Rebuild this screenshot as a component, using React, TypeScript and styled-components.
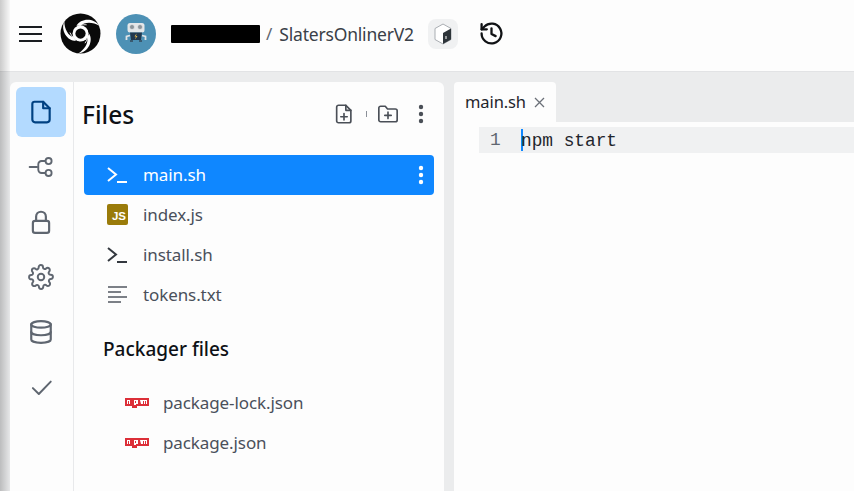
import React from 'react';
import styled, {createGlobalStyle} from 'styled-components';

const GlobalStyle = createGlobalStyle`
  html, body {
    margin: 0;
    padding: 0;
    height: 100%;
    overflow: hidden;
    background-color: #ebeced;
    font-family: "Noto Sans", "Open Sans", sans-serif;
  }
  #root {
    height: 100%;
  }
`;

const Page = styled.div`
  position: relative;
  display: flex;
  flex-direction: column;
  width: 854px;
  height: 491px;
  overflow: hidden;
`;

const EdgeShadow = styled.div`
  position: absolute;
  top: 0;
  left: 0;
  bottom: 0;
  width: 10px;
  background: linear-gradient(to right, rgba(0, 0, 0, .2), rgba(0, 0, 0, .02));
  pointer-events: none;
`;

const Header = styled.header`
  display: flex;
  align-items: center;
  flex: 0 0 72px;
  box-sizing: border-box;
  height: 72px;
  padding: 0 0 4px 19px;
  background-color: #fdfdfd;
  border-bottom: 1px solid #e2e3e5;
`;

const LogoSlot = styled.div`
  display: flex;
  margin: 0 15px 0 17px;
`;

const Owner = styled.div`
  width: 89px;
  height: 18px;
  margin: 0 6px 0 15px;
  background-color: #000;
  border-radius: 1px;
`;

const Slash = styled.span`
  margin-right: 7px;
  color: #5f6670;
  font-size: 17px;
`;

const RepoName = styled.span`
  width: 134px;
  color: #3a4048;
  font-size: 17.5px;
  letter-spacing: -0.2px;
  white-space: nowrap;
`;

const LangBadge = styled.div`
  display: flex;
  justify-content: center;
  align-items: center;
  width: 30px;
  height: 30px;
  margin: 0 21px 0 15px;
  background-color: #f0f1f2;
  border-radius: 8px;
`;

const Workspace = styled.div`
  display: flex;
  flex: 1;
  min-height: 0;
  gap: 10px;
  padding: 10px 0 0 10px;
`;

const LeftPanel = styled.section`
  display: flex;
  flex: 0 0 434px;
  background-color: #fdfdfd;
  border-radius: 6px 6px 0 0;
`;

const Rail = styled.nav`
  display: flex;
  flex-direction: column;
  align-items: center;
  flex: 0 0 63px;
  box-sizing: border-box;
  gap: 5px;
  padding: 5px 7px 0 6px;
  border-right: 1px solid #e8e9eb;
`;

const RailButton = styled.div<{$active?: boolean}>`
  display: flex;
  justify-content: center;
  align-items: center;
  flex: 0 0 50px;
  width: 50px;
  color: ${props => props.$active ? '#004182' : '#5f6670'};
  background-color: ${props => props.$active ? '#b3daff' : 'transparent'};
  border-radius: 6px;
`;

const FilesPane = styled.div`
  flex: 1;
  min-width: 0;
  padding: 0 10px;
`;

const FilesHeader = styled.div`
  display: flex;
  align-items: center;
  height: 64px;
`;

const FilesTitle = styled.h2`
  flex: 1;
  margin: 0 0 -1px -2px;
  color: #0e1116;
  font-size: 24.5px;
  font-weight: 500;
`;

const HeaderTools = styled.div`
  display: flex;
  align-items: center;
  margin-right: 10px;
  color: #4a4f57;
`;

const ToolDivider = styled.div`
  width: 1px;
  height: 6px;
  margin: 0 10px 0 11px;
  background-color: #8b9098;
`;

const ToolKebab = styled.div`
  display: flex;
  margin-left: 19px;
`;

const FileList = styled.div`
  display: flex;
  flex-direction: column;
  margin-top: 9px;
`;

const FileRow = styled.div<{$active?: boolean; $indent?: boolean}>`
  display: flex;
  align-items: center;
  height: 40px;
  padding-left: ${props => props.$indent ? '41px' : '23px'};
  padding-right: 10px;
  color: ${props => props.$active ? '#fff' : '#4a505b'};
  background-color: ${props => props.$active ? '#0f87ff' : 'transparent'};
  border-radius: 4px;
`;

const FileIconSlot = styled.div`
  display: flex;
  justify-content: center;
  align-items: center;
  flex: 0 0 22px;
  height: 22px;
  margin-right: 14px;
`;

const FileName = styled.span`
  flex: 1;
  margin-top: -2px;
  font-size: 17px;
  letter-spacing: -0.1px;
`;

const RowMenu = styled.div`
  display: flex;
  color: #fff;
`;

const JsBadge = styled.div`
  display: flex;
  justify-content: flex-end;
  align-items: flex-end;
  box-sizing: border-box;
  width: 21px;
  height: 21px;
  margin: -2px 1px 0 0;
  padding: 0 2px 2px 0;
  color: #fff;
  background-color: #9a7b0a;
  border-radius: 2px;
  font-family: "Liberation Sans", sans-serif;
  font-size: 11.500px;
  font-weight: 700;
  line-height: 1;
`;

const SectionTitle = styled.h3`
  margin: 22px 0 22px 19px;
  color: #0e1116;
  font-size: 19px;
  font-weight: 500;
  line-height: 24px;
`;

const RightPanel = styled.section`
  display: flex;
  flex-direction: column;
  flex: 1;
  min-width: 0;
`;

const TabBar = styled.div`
  display: flex;
  flex: 0 0 40px;
`;

const Tab = styled.div`
  display: flex;
  align-items: center;
  box-sizing: border-box;
  width: 102px;
  padding: 0 0 2px 11px;
  color: #1f252c;
  background-color: #fdfdfd;
  border-radius: 4px 4px 0 0;
  font-size: 16.500px;
  letter-spacing: -0.1px;
`;

const TabClose = styled.div`
  display: flex;
  margin: 2px 0 0 8px;
  color: #6b7078;
`;

const Editor = styled.div`
  flex: 1;
  padding-top: 5px;
  background-color: #fdfdfd;
`;

const CodeLine = styled.div`
  display: flex;
  align-items: center;
  height: 26px;
  margin-left: 25px;
  background-color: #f0f1f2;
`;

const LineNumber = styled.span`
  flex: 0 0 42px;
  box-sizing: border-box;
  padding-left: 11px;
  color: #5f6670;
  font-family: "Liberation Mono", monospace;
  font-size: 17.800px;
`;

const Caret = styled.span`
  flex: 0 0 2px;
  height: 22px;
  margin-right: -2px;
  background-color: #0f87ff;
`;

const Code = styled.span`
  margin-top: 1px;
  color: #1f252c;
  font-family: "Liberation Mono", monospace;
  font-size: 17.800px;
`;

const Stroke = ({size = 24, width = 2, children}: {size?: number; width?: number; children: React.ReactNode}) =>
  <svg width={size} height={size} viewBox="0 0 24 24" fill="none" stroke="currentColor" strokeWidth={width}
       strokeLinecap="round" strokeLinejoin="round">{children}</svg>;

const FileIcon = () => <Stroke size={26}>
  <path d="M6 2.500h8l6 6V19a2.500 2.500 0 0 1-2.500 2.500h-11A2.500 2.500 0 0 1 4 19V4.500a2 2 0 0 1 2-2Z"/>
  <path d="M14 2.500V8.500h6"/>
</Stroke>;

const GitIcon = () => <Stroke size={26} width={1.7}>
  <path d="M1.500 12h7"/>
  <path d="M16 6.500h-3.500a3 3 0 0 0-3 3v5a3 3 0 0 0 3 3H16"/>
  <circle cx="19" cy="6.500" r="2.800"/>
  <circle cx="19" cy="17.500" r="2.800"/>
</Stroke>;

const LockIcon = () => <Stroke size={26}>
  <rect x="4.500" y="11" width="15" height="11" rx="2"/>
  <path d="M7.500 11V7a4.500 4.500 0 0 1 9 0v4"/>
</Stroke>;

const GearIcon = () => <Stroke size={26} width={1.8}>
  <circle cx="12" cy="12" r="3"/>
  <path d="M19.400 15a1.650 1.650 0 0 0 .33 1.820l.06.06a2 2 0 1 1-2.830 2.830l-.06-.06a1.650 1.650 0 0 0-2.820 1.170V21a2 2 0 1 1-4 0v-.09a1.650 1.650 0 0 0-2.820-1.110l-.06.06a2 2 0 1 1-2.830-2.830l.06-.06a1.650 1.650 0 0 0-1.170-2.820H3a2 2 0 1 1 0-4h.09a1.650 1.650 0 0 0 1.110-2.820l-.06-.06a2 2 0 1 1 2.830-2.830l.06.06a1.650 1.650 0 0 0 2.820-1.170V3a2 2 0 1 1 4 0v.09a1.650 1.650 0 0 0 2.820 1.110l.06-.06a2 2 0 1 1 2.830 2.830l-.06.06a1.650 1.650 0 0 0 1.170 2.820H21a2 2 0 1 1 0 4h-.09A1.650 1.650 0 0 0 19.400 15Z"/>
</Stroke>;

const DatabaseIcon = () => <Stroke size={26}>
  <ellipse cx="12" cy="5" rx="9" ry="3"/>
  <path d="M3 5v14c0 1.660 4 3 9 3s9-1.340 9-3V5"/>
  <path d="M3 12c0 1.660 4 3 9 3s9-1.340 9-3"/>
</Stroke>;

const CheckIcon = () => <Stroke size={26} width={1.800}>
  <path d="M4.500 13l5.500 5.500L21 7"/>
</Stroke>;

const Hamburger = () => <svg width="24" height="18" viewBox="0 0 24 18" fill="none" stroke="#1a1d21" strokeWidth="2">
  <path d="M0 2h23M0 9h23M0 16h23"/>
</svg>;

const LOGO_ANGLES = [0, 120, 240];

const Logo = () => <svg width="41" height="41" viewBox="0 0 40 40">
  <circle cx="20" cy="20" r="19.500" fill="#0a0a0a"/>
  {LOGO_ANGLES.map(angle => <path key={angle} transform={`rotate(${angle} 20 20)`} fill="#fff"
                                  d="M16 12.500C20 5.500 32 4 38.500 12.500C32 8.500 24 8.500 20 12.500Z"/>)}
  {LOGO_ANGLES.map(angle => <path key={angle} transform={`rotate(${angle} 20 20)`} fill="none" stroke="#fff"
                                  strokeWidth=".8" d="M26 11.500C22 11 17 12.500 14 16"/>)}
  <circle cx="20" cy="20" r="7.800" fill="#fff"/>
  <circle cx="20" cy="20" r="5" fill="#0a0a0a"/>
</svg>;

const RobotAvatar = () => <svg width="40" height="40" viewBox="0 0 40 40">
  <circle cx="20" cy="20" r="20" fill="#4d91b5"/>
  <rect x="11.500" y="9" width="17" height="9.500" rx="2.500" fill="#e4e7e9"/>
  <circle cx="16" cy="13" r="2.500" fill="#8b949a" stroke="#f2f3f4" strokeWidth=".6"/>
  <circle cx="24" cy="13" r="2.500" fill="#8b949a" stroke="#f2f3f4" strokeWidth=".6"/>
  <path d="M14 18.500h12l-1 7.500H15Z" fill="#22384d"/>
  <path d="M20.500 19.500l-2 3h1.500l-1 3 2.500-3.500h-1.500Z" fill="#e9b949"/>
  <path d="M14 21.500l-3.500 1V26M26 21.500l3.500 1V26" stroke="#dfe3e6" strokeWidth="1.800" fill="none"/>
  <path d="M14 27h3M23 27h3" stroke="#33485a" strokeWidth="1.500"/>
</svg>;

const BashCube = () => <svg width="20" height="22" viewBox="0 0 20 22">
  <path d="M10 1l8 4.500v11L10 21 2 16.500v-11Z" fill="#fff" stroke="#a9adb2" strokeWidth="1"/>
  <path d="M18 5.500v11L10 21V10Z" fill="#2d3439"/>
  <path d="M13 13v3" stroke="#fff" strokeWidth="1"/>
</svg>;

const HistoryIcon = () => <svg width="25" height="25" viewBox="0 0 24 24" fill="none" stroke="#101215" strokeWidth="2.200"
                               strokeLinecap="round" strokeLinejoin="round">
  <path d="M2.500 12a9.500 9.500 0 1 0 2.800-6.700L2.500 8"/>
  <path d="M2.500 3v5h5"/>
  <path d="M12 7v5.500l4 2"/>
</svg>;

const NewFileIcon = () => <Stroke size={22} width={1.8}>
  <path d="M6 2.500h8l5.500 5.500v11.500a2 2 0 0 1-2 2h-11.500a2 2 0 0 1-2-2v-15a2 2 0 0 1 2-2Z"/>
  <path d="M14 2.500V8h5.500"/>
  <path d="M8.500 15h7M12 11.500v7"/>
</Stroke>;

const NewFolderIcon = () => <Stroke size={22} width={1.8}>
  <path d="M4 3.500h5l2.500 3H20a2 2 0 0 1 2 2V18.500a2 2 0 0 1-2 2H4a2 2 0 0 1-2-2v-13a2 2 0 0 1 2-2Z"/>
  <path d="M8.500 13.500h7M12 10v7"/>
</Stroke>;

const KebabIcon = () => <svg width="6" height="20" viewBox="0 0 6 20" fill="currentColor">
  <circle cx="3" cy="3" r="2.200"/>
  <circle cx="3" cy="10" r="2.200"/>
  <circle cx="3" cy="17" r="2.200"/>
</svg>;

const PromptIcon = ({color}: {color: string}) => <svg width="22" height="18" viewBox="0 0 22 18" fill="none"
                                                       stroke={color} strokeWidth="2">
  <path d="M1 2l8 6.500L1 15"/>
  <path d="M10 16h10"/>
</svg>;

const TextIcon = () => <svg width="22" height="20" viewBox="0 0 22 20" fill="none" stroke="#7c8087" strokeWidth="2">
  <path d="M1 2h19M1 7h13M1 12h19M1 17h13"/>
</svg>;

const NpmIcon = () => <svg width="24" height="10" viewBox="0 0 24 10">
  <path d="M0 0h24v8H12v2H7V8H0Z" fill="#dc2f38"/>
  <path d="M2 2h3v4H4V3H3v3H2ZM9 2h4v4h-2v1H9Zm1 1v2h1V3ZM15 2h7v4h-1V3h-1v3h-1V3h-1v3h-2Z" fill="#fff"/>
</svg>;

const CloseIcon = () => <svg width="11" height="11" viewBox="0 0 11 11" fill="none" stroke="currentColor" strokeWidth="1.300">
  <path d="M1 1l9 9M10 1l-9 9"/>
</svg>;

export default function App() {
  return <Page>
    <GlobalStyle/>
    <Header>
      <Hamburger/>
      <LogoSlot><Logo/></LogoSlot>
      <RobotAvatar/>
      <Owner/>
      <Slash>/</Slash>
      <RepoName>SlatersOnlinerV2</RepoName>
      <LangBadge><BashCube/></LangBadge>
      <HistoryIcon/>
    </Header>
    <Workspace>
      <LeftPanel>
        <Rail>
          <RailButton $active><FileIcon/></RailButton>
          <RailButton><GitIcon/></RailButton>
          <RailButton><LockIcon/></RailButton>
          <RailButton><GearIcon/></RailButton>
          <RailButton><DatabaseIcon/></RailButton>
          <RailButton><CheckIcon/></RailButton>
        </Rail>
        <FilesPane>
          <FilesHeader>
            <FilesTitle>Files</FilesTitle>
            <HeaderTools>
              <NewFileIcon/>
              <ToolDivider/>
              <NewFolderIcon/>
              <ToolKebab><KebabIcon/></ToolKebab>
            </HeaderTools>
          </FilesHeader>
          <FileList>
            <FileRow $active>
              <FileIconSlot><PromptIcon color="#fff"/></FileIconSlot>
              <FileName>main.sh</FileName>
              <RowMenu><KebabIcon/></RowMenu>
            </FileRow>
            <FileRow>
              <FileIconSlot><JsBadge>JS</JsBadge></FileIconSlot>
              <FileName>index.js</FileName>
            </FileRow>
            <FileRow>
              <FileIconSlot><PromptIcon color="#33383f"/></FileIconSlot>
              <FileName>install.sh</FileName>
            </FileRow>
            <FileRow>
              <FileIconSlot><TextIcon/></FileIconSlot>
              <FileName>tokens.txt</FileName>
            </FileRow>
          </FileList>
          <SectionTitle>Packager files</SectionTitle>
          <FileList>
            <FileRow $indent>
              <FileIconSlot><NpmIcon/></FileIconSlot>
              <FileName>package-lock.json</FileName>
            </FileRow>
            <FileRow $indent>
              <FileIconSlot><NpmIcon/></FileIconSlot>
              <FileName>package.json</FileName>
            </FileRow>
          </FileList>
        </FilesPane>
      </LeftPanel>
      <RightPanel>
        <TabBar>
          <Tab>
            main.sh
            <TabClose><CloseIcon/></TabClose>
          </Tab>
        </TabBar>
        <Editor>
          <CodeLine>
            <LineNumber>1</LineNumber>
            <Caret/>
            <Code>npm start</Code>
          </CodeLine>
        </Editor>
      </RightPanel>
    </Workspace>
    <EdgeShadow/>
  </Page>;
}
